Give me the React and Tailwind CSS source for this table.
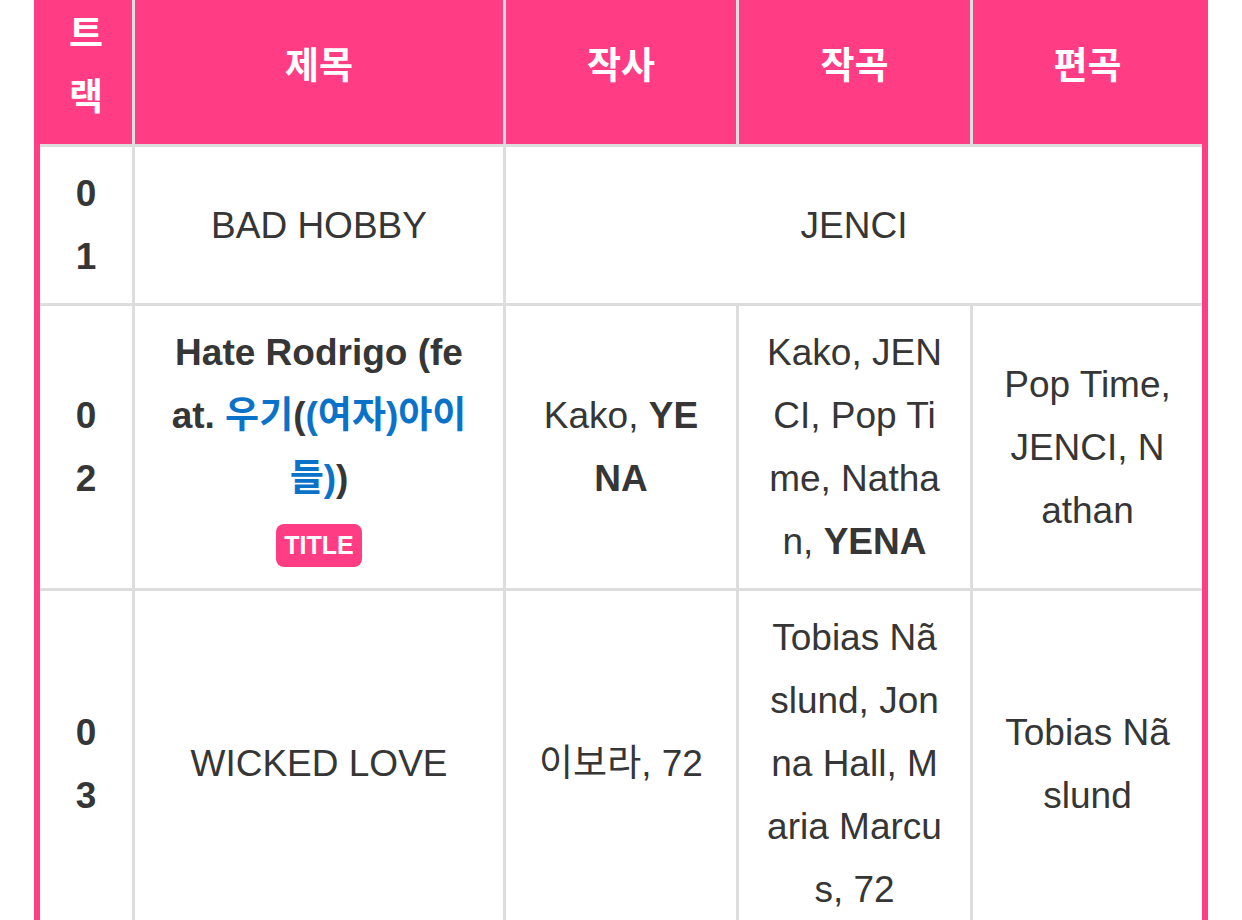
import React from "react";

// each cell's lines are given explicitly so the wrapping matches the narrow columns
const Lines = ({ lines }) => (
  <div>
    {lines.map((line, i) => (
      <span key={i} className="block whitespace-nowrap">
        {line}
      </span>
    ))}
  </div>
);

const HeadCell = ({ children }) => (
  <div className="bg-[#ff3c84] text-white font-bold flex items-center justify-center text-center px-[20px] py-[15px]">
    {children}
  </div>
);

const Cell = ({ children, className = "" }) => (
  <div
    className={
      "bg-white flex items-center justify-center text-center px-[20px] py-[15px] " +
      className
    }
  >
    {children}
  </div>
);

const Link = ({ children }) => (
  <span className="text-[#0b72c9]">{children}</span>
);

const App = () => {
  return (
    <div className="w-[1242px] h-[920px] overflow-hidden bg-white font-['Liberation_Sans','Noto_Sans_CJK_KR',sans-serif] text-[37px] leading-[63px] text-[#363636]">
      <div className="mx-[34px] -mt-[18px] grid grid-cols-[92px_368px_230px_231px_229px] gap-[3px] bg-[#dddddd] border-[6px] border-[#ff3c84]">
        {/* header */}
        <HeadCell>
          <Lines lines={["트", "랙"]} />
        </HeadCell>
        <HeadCell>제목</HeadCell>
        <HeadCell>작사</HeadCell>
        <HeadCell>작곡</HeadCell>
        <HeadCell>편곡</HeadCell>

        {/* 01 */}
        <Cell className="font-bold">
          <Lines lines={["0", "1"]} />
        </Cell>
        <Cell>BAD HOBBY</Cell>
        <Cell className="col-span-3">JENCI</Cell>

        {/* 02 */}
        <Cell className="font-bold">
          <Lines lines={["0", "2"]} />
        </Cell>
        <Cell className="font-bold">
          <div>
            <Lines
              lines={[
                "Hate Rodrigo (fe",
                <>
                  at. <Link>우기</Link>(<Link>(여자)아이</Link>
                </>,
                <>
                  <Link>들)</Link>)
                </>,
              ]}
            />
            <span className="inline-block mt-[2px] bg-[#ff3c84] text-white text-[25px] leading-[29px] px-[8px] py-[7px] rounded-[8px] align-middle">
              TITLE
            </span>
          </div>
        </Cell>
        <Cell>
          <Lines
            lines={[
              <>
                Kako, <b>YE</b>
              </>,
              <b>NA</b>,
            ]}
          />
        </Cell>
        <Cell>
          <Lines
            lines={[
              "Kako, JEN",
              "CI, Pop Ti",
              "me, Natha",
              <>
                n, <b>YENA</b>
              </>,
            ]}
          />
        </Cell>
        <Cell>
          <Lines lines={["Pop Time,", "JENCI, N", "athan"]} />
        </Cell>

        {/* 03 */}
        <Cell className="font-bold">
          <Lines lines={["0", "3"]} />
        </Cell>
        <Cell>WICKED LOVE</Cell>
        <Cell>이보라, 72</Cell>
        <Cell>
          <Lines
            lines={[
              "Tobias Nã",
              "slund, Jon",
              "na Hall, M",
              "aria Marcu",
              "s, 72",
            ]}
          />
        </Cell>
        <Cell>
          <Lines lines={["Tobias Nã", "slund"]} />
        </Cell>
      </div>
    </div>
  );
};

export default App;
